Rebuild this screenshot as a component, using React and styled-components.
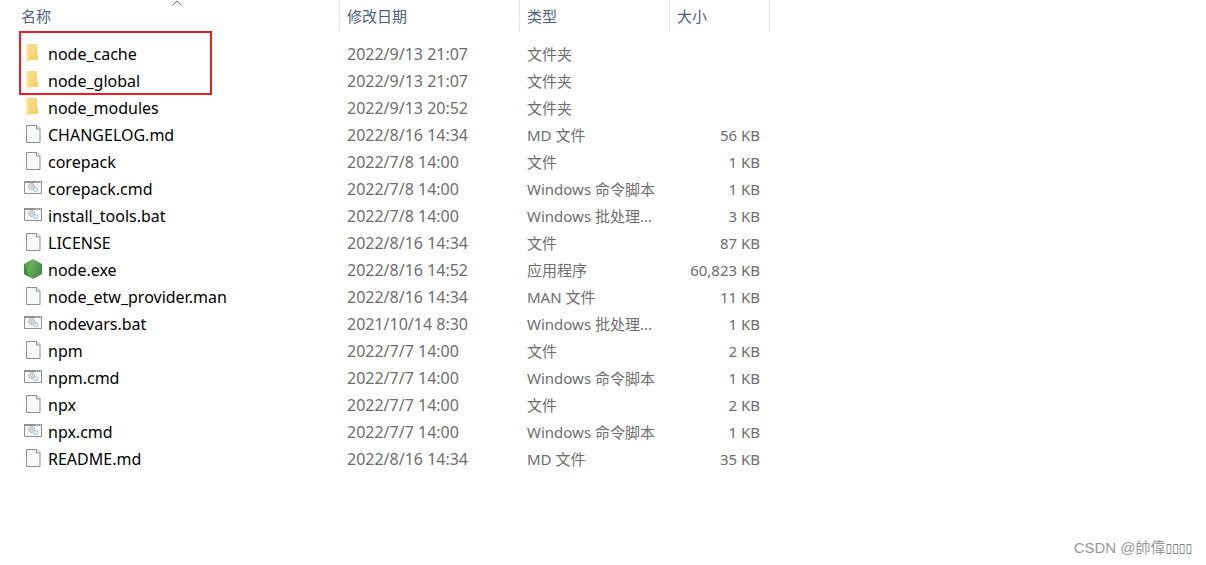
import styled, { createGlobalStyle } from "styled-components";

const GlobalStyle = createGlobalStyle`
  * {
    box-sizing: border-box;
  }

  body {
    margin: 0;
    background: #fff;
    font-family: "Noto Sans", "Noto Sans CJK SC", sans-serif;
    font-size: 15px;
    line-height: 20px;
  }
`;

const Page = styled.main`
  display: flex;
  flex-direction: column;
  justify-content: space-between;
  min-height: 100vh;
`;

const Explorer = styled.section`
  position: relative;
`;

const FileTable = styled.table`
  width: 100%;
  max-width: 770px;
  table-layout: fixed;
  border-collapse: separate;
  border-spacing: 0;
`;

const Column = styled.col`
  width: ${({ $width }) => $width}px;
`;

const HeadCell = styled.th`
  position: relative;
  height: 32px;
  padding: 0;
  border-right: 1px solid #e5e5e5;
`;

const SortButton = styled.button`
  display: block;
  width: 100%;
  height: 32px;
  padding: 0 0 0 ${({ $indent }) => $indent || 7}px;
  border: 0;
  background: none;
  color: #4c607a;
  font: inherit;
  font-weight: 400;
  text-align: left;
`;

const SortArrow = styled.svg`
  position: absolute;
  top: 0;
  left: 50%;
  margin-left: 2px;
`;

const Body = styled.tbody`
  &::before {
    content: "";
    display: block;
    height: 8px;
  }
`;

const Cell = styled.td`
  height: 27px;
  padding: 0 10px 0 7px;
  color: #6d6d6d;
  text-align: ${({ $align }) => $align || "left"};
  white-space: nowrap;
  overflow: hidden;
  text-overflow: ellipsis;
`;

const NameCell = styled(Cell)`
  padding-left: 24px;
  color: #000;
  font-size: 16px;
`;

const DateCell = styled(Cell)`
  font-size: 16px;
`;

const FileName = styled.span`
  display: flex;
  align-items: center;
  gap: 6px;
`;

const Icon = styled.svg`
  flex: none;
  width: 18px;
  height: 20px;
  margin-bottom: 1px;
`;

const Highlight = styled.div`
  position: absolute;
  top: 31px;
  left: 19px;
  width: 193px;
  height: 64px;
  border: 2px solid #ed1c24;
  pointer-events: none;
`;

const Watermark = styled.footer`
  display: flex;
  justify-content: flex-end;
  align-items: center;
  padding: 0 14px 7px 0;
  color: #999;
  font-family: "Liberation Sans", "Noto Sans CJK TC", sans-serif;
`;

const Boxes = styled.span`
  color: #666;
  font-family: "DejaVu Sans", sans-serif;
  font-size: 12px;
`;

function FolderIcon() {
  return (
    <Icon viewBox="0 0 18 20" aria-hidden="true">
      <defs>
        <linearGradient id="folder" x1="0" y1="0" x2="1" y2="1">
          <stop offset="0" stopColor="#fbe08f" />
          <stop offset="1" stopColor="#f3cd66" />
        </linearGradient>
      </defs>
      <path d="M3 1h10v11h1v5H5z" fill="url(#folder)" />
      <path d="M2 1l3 2.5v15.5l-3-2z" fill="#ffe9a6" />
      <path d="M5 3.5v15" stroke="#edcb70" strokeWidth="0.7" />
    </Icon>
  );
}

function DocumentIcon() {
  return (
    <Icon viewBox="0 0 18 20" aria-hidden="true">
      <path d="M2.5 1.5h10.5l3 3v14H2.5z" fill="#f8f9f9" stroke="#8e8e8e" />
      <path d="M12.5 1.5v3.500h3.500" fill="#fff" stroke="#8e8e8e" />
    </Icon>
  );
}

function ScriptIcon() {
  return (
    <Icon viewBox="0 0 18 20" aria-hidden="true">
      <path d="M.5 4.5h17v11H.5z" fill="#fafafa" stroke="#8d9094" />
      <path d="M0 4h18" stroke="#8d9094" strokeWidth="2" />
      <path d="M12 4h1M14 4h1M16 4h1" stroke="#e4e4e4" />
      <circle cx="7.5" cy="8.5" r="2.8" fill="#f4f4f4" stroke="#858585" strokeDasharray="1.4 .5" />
      <circle cx="7.5" cy="8.5" r="1" fill="none" stroke="#999" strokeWidth=".7" />
      <circle cx="11.5" cy="11.500" r="2.1" fill="#e6f3fb" stroke="#79add0" strokeDasharray="1.3 .4" />
    </Icon>
  );
}

function NodeIcon() {
  return (
    <Icon viewBox="0 0 18 20" aria-hidden="true">
      <defs>
        <linearGradient id="node" x1="0" y1="0.2" x2="1" y2="0.6">
          <stop offset="0" stopColor="#4f9f42" />
          <stop offset="0.4" stopColor="#69ae58" />
          <stop offset="1" stopColor="#3f8742" />
        </linearGradient>
      </defs>
      <path d="M9 0l9 5v10l-9 5-9-5V5z" fill="url(#node)" />
      <path d="M0 5l5.5 13L0 15z" fill="#3d8b3a" />
    </Icon>
  );
}

const icons = {
  folder: FolderIcon,
  document: DocumentIcon,
  script: ScriptIcon,
  node: NodeIcon,
};

const files = [
  { icon: "folder", name: "node_cache", date: "2022/9/13 21:07", type: "文件夹", size: "" },
  { icon: "folder", name: "node_global", date: "2022/9/13 21:07", type: "文件夹", size: "" },
  { icon: "folder", name: "node_modules", date: "2022/9/13 20:52", type: "文件夹", size: "" },
  { icon: "document", name: "CHANGELOG.md", date: "2022/8/16 14:34", type: "MD 文件", size: "56 KB" },
  { icon: "document", name: "corepack", date: "2022/7/8 14:00", type: "文件", size: "1 KB" },
  { icon: "script", name: "corepack.cmd", date: "2022/7/8 14:00", type: "Windows 命令脚本", size: "1 KB" },
  { icon: "script", name: "install_tools.bat", date: "2022/7/8 14:00", type: "Windows 批处理...", size: "3 KB" },
  { icon: "document", name: "LICENSE", date: "2022/8/16 14:34", type: "文件", size: "87 KB" },
  { icon: "node", name: "node.exe", date: "2022/8/16 14:52", type: "应用程序", size: "60,823 KB" },
  { icon: "document", name: "node_etw_provider.man", date: "2022/8/16 14:34", type: "MAN 文件", size: "11 KB" },
  { icon: "script", name: "nodevars.bat", date: "2021/10/14 8:30", type: "Windows 批处理...", size: "1 KB" },
  { icon: "document", name: "npm", date: "2022/7/7 14:00", type: "文件", size: "2 KB" },
  { icon: "script", name: "npm.cmd", date: "2022/7/7 14:00", type: "Windows 命令脚本", size: "1 KB" },
  { icon: "document", name: "npx", date: "2022/7/7 14:00", type: "文件", size: "2 KB" },
  { icon: "script", name: "npx.cmd", date: "2022/7/7 14:00", type: "Windows 命令脚本", size: "1 KB" },
  { icon: "document", name: "README.md", date: "2022/8/16 14:34", type: "MD 文件", size: "35 KB" },
];

function FileRow({ file }) {
  const { icon, name, date, type, size } = file;
  const FileIcon = icons[icon];

  return (
    <tr>
      <NameCell>
        <FileName>
          <FileIcon />
          {name}
        </FileName>
      </NameCell>
      <DateCell>{date}</DateCell>
      <Cell>{type}</Cell>
      <Cell $align="right">{size}</Cell>
    </tr>
  );
}

export default function App() {
  return (
    <Page lang="zh-CN">
      <GlobalStyle />
      <Explorer>
        <FileTable>
          <colgroup>
            <Column $width={340} />
            <Column $width={180} />
            <Column $width={150} />
            <Column $width={100} />
          </colgroup>
          <thead>
            <tr>
              <HeadCell aria-sort="ascending">
                <SortButton $indent={21}>名称</SortButton>
                <SortArrow width="10" height="7" viewBox="0 0 10 7" aria-hidden="true">
                  <path d="M.5 5.5L5 1l4.5 4.5" fill="none" stroke="#6d6d6d" />
                </SortArrow>
              </HeadCell>
              <HeadCell>
                <SortButton>修改日期</SortButton>
              </HeadCell>
              <HeadCell>
                <SortButton>类型</SortButton>
              </HeadCell>
              <HeadCell>
                <SortButton>大小</SortButton>
              </HeadCell>
            </tr>
          </thead>
          <Body>
            {files.map((file) => (
              <FileRow key={file.name} file={file} />
            ))}
          </Body>
        </FileTable>
        <Highlight />
      </Explorer>
      <Watermark>
        CSDN @帥偉<Boxes>▯▯▯▯</Boxes>
      </Watermark>
    </Page>
  );
}
